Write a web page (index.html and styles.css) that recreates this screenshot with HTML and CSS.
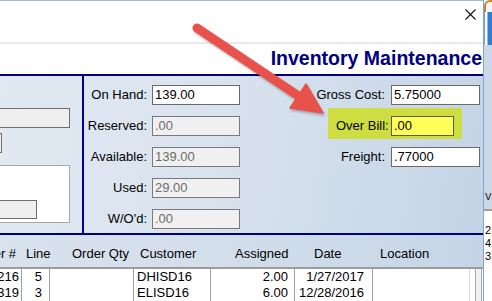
FILE: index.html
```html
<!DOCTYPE html>
<html>
<head>
<meta charset="utf-8">
<title>Inventory Maintenance</title>
<link rel="stylesheet" href="styles.css">
</head>
<body>
<div class="screen">
  <div class="dialog">
    <div class="topstrip"></div>
    <div class="titlebar">
      <svg class="close" viewBox="0 0 11 11" width="11" height="11"><path d="M0.5 0.5 L10.5 10.5 M10.5 0.5 L0.5 10.5" stroke="#111" stroke-width="1.1" fill="none"/></svg>
    </div>
    <div class="sep"></div>
    <div class="heading"><h1 class="title">Inventory Maintenance</h1></div>
    <div class="panel">
      <div class="left">
        <div class="box b1"></div>
        <div class="box b2"></div>
        <div class="list"><div class="box b3"></div></div>
      </div>
      <div class="mid">
        <div class="row"><span class="lbl">On Hand:</span><span class="fld">139.00</span></div>
        <div class="row"><span class="lbl">Reserved:</span><span class="fld dis">.00</span></div>
        <div class="row"><span class="lbl">Available:</span><span class="fld dis">139.00</span></div>
        <div class="row"><span class="lbl">Used:</span><span class="fld dis">29.00</span></div>
        <div class="row"><span class="lbl">W/O'd:</span><span class="fld dis">.00</span></div>
      </div>
      <div class="right">
        <div class="row"><span class="lbl">Gross Cost:</span><span class="fld">5.75000</span></div>
        <div class="row">
          <div class="hl"><span class="lbl">Over Bill:</span><span class="fld yellow">.00</span></div>
        </div>
        <div class="row"><span class="lbl">Freight:</span><span class="fld">.77000</span></div>
      </div>
    </div>
    <div class="grid">
      <div class="ghead">
        <span class="h h1">Order #</span>
        <span class="h h2">Line</span>
        <span class="h h3">Order Qty</span>
        <span class="h h4">Customer</span>
        <span class="h h5">Assigned</span>
        <span class="h h6">Date</span>
        <span class="h h7">Location</span>
      </div>
      <div class="gbody">
        <div class="grow">
          <span class="c c1">4216</span><span class="c c2">5</span><span class="c c3"></span><span class="c c4">DHISD16</span><span class="c c5">2.00</span><span class="c c6">1/27/2017</span><span class="c c7"></span><span class="c scroll"></span>
        </div>
        <div class="grow">
          <span class="c c1">4319</span><span class="c c2">3</span><span class="c c3"></span><span class="c c4">ELISD16</span><span class="c c5">6.00</span><span class="c c6">12/28/2016</span><span class="c c7"></span><span class="c scroll"></span>
        </div>
      </div>
    </div>
  </div>
  <div class="behind">
    <div class="bw-top"></div>
    <div class="bw-blue"></div>
    <div class="bw-panel"><span class="bw-v">v</span></div>
    <div class="bw-list"><span>2</span><span>4</span><span>3</span></div>
  </div>
  <svg class="arrow" viewBox="0 0 492 301" width="492" height="301">
    <g fill="#e8524a" stroke="#e8524a">
      <line x1="197" y1="28" x2="300" y2="97" stroke-width="9" stroke-linecap="round"/>
      <polygon points="290,108 306,84 323,113" stroke-width="1.5" stroke-linejoin="round"/>
    </g>
  </svg>
</div>
</body>
</html>
```
FILE: styles.css
```css
* { box-sizing: border-box; margin: 0; padding: 0; }
html, body { width: 492px; height: 301px; overflow: hidden; }
body {
  font-family: "Liberation Sans", Arial, sans-serif;
  font-size: 13px;
  color: #000;
  background: #fff;
}
.screen {
  position: relative;
  display: flex;
  width: 492px;
  height: 301px;
  overflow: hidden;
}
.dialog {
  width: 484px;
  flex: none;
  border-right: 1px solid #7ea6cf;
  display: flex;
  flex-direction: column;
  background: #fff;
}
.topstrip { height: 1px; background: #a9bacb; }
.titlebar {
  height: 43px;
  display: flex;
  justify-content: flex-end;
  align-items: flex-start;
  padding: 8px 7px 0 0;
}
.close { display: block; }
.sep { height: 2px; background: #e8e8e8; }
.heading {
  height: 32px;
  padding: 3px 1px 0 0;
  text-align: right;
}
.title {
  font-size: 19.5px;
  font-weight: bold;
  color: #000080;
  line-height: 22px;
  white-space: nowrap;
}
.panel {
  height: 161px;
  flex: none;
  display: flex;
  border-top: 2px solid #000080;
  border-bottom: 2px solid #000080;
  background: linear-gradient(100deg, #e1e9f2 0%, #d9e3ee 45%, #c4d4e6 100%);
}
.left {
  width: 84px;
  flex: none;
  border-right: 2px solid #000080;
  padding-top: 32px;
  display: flex;
  flex-direction: column;
  align-items: flex-start;
}
.box {
  height: 20px;
  background: #efefef;
  border: 1px solid #6e6e6e;
}
.b1 { width: 100px; margin-left: -30px; }
.b2 { width: 40px; margin-left: -38px; margin-top: 5px; }
.list {
  width: 100px;
  height: 58px;
  margin-left: -30px;
  margin-top: 12px;
  background: #fff;
  border: 1px solid #a8a8a8;
  padding-top: 34px;
}
.b3 { width: 66px; height: 19px; }
.mid {
  width: 161px;
  flex: none;
  padding-top: 9px;
  display: flex;
  flex-direction: column;
  gap: 11px;
}
.right {
  flex: 1;
  padding-top: 9px;
  display: flex;
  flex-direction: column;
  gap: 11px;
}
.row { display: flex; height: 20px; gap: 5px; }
.lbl {
  text-align: right;
  line-height: 20px;
  white-space: nowrap;
  color: #000;
}
.mid .lbl { width: 63px; }
.mid .fld { width: 88px; }
.right .row { gap: 6px; }
.right .lbl { width: 140px; }
.right .fld { width: 89px; }
.fld {
  height: 20px;
  background: #fff;
  border: 1px solid #6a6a6a;
  padding-left: 2px;
  line-height: 18px;
  color: #000;
  white-space: nowrap;
}
.fld.dis { background: #f0f0f0; color: #6d6d6d; border-color: #7a7a7a; }
.hl {
  display: flex;
  gap: 6px;
  margin: -8px 0 -3px 83px;
  padding: 8px 8px 3px 8px;
  background: #cedd42;
  height: 31px;
}
.right .hl .lbl { width: 49px; }
.right .hl .fld { width: 63px; }
.fld.yellow { background: #ffff5c; border-color: #5c5c40; }

.grid { flex: 1; display: flex; flex-direction: column; }
.ghead {
  height: 32px;
  flex: none;
  display: flex;
  padding-top: 11px;
  line-height: 16px;
  white-space: nowrap;
  background: linear-gradient(100deg, #d9e3ee 0%, #d3deeb 45%, #c5d5e7 100%);
}
.h { flex: none; }
.h1 { width: 54px; margin-left: -28px; }
.h2 { width: 46px; }
.h3 { width: 68px; }
.h4 { width: 95px; }
.h5 { width: 79px; }
.h6 { width: 66px; }
.h7 { width: 60px; }
.gbody {
  flex: 1;
  background: #fff;
  border-top: 2px solid #9c9c9c;
}
.grow { display: flex; height: 16px; line-height: 16px; white-space: nowrap; }
.c { flex: none; height: 16px; border-right: 1px solid #a0a0a0; overflow: hidden; }
.c1 { width: 62px; margin-left: -40px; text-align: right; padding-right: 2px; }
.c2 { width: 28px; text-align: right; padding-right: 7px; }
.c3 { width: 84px; }
.c4 { width: 77px; padding-left: 3px; }
.c5 { width: 84px; text-align: right; padding-right: 6px; }
.c6 { width: 78px; text-align: right; padding-right: 8px; }
.c7 { width: 97px; border-right-color: #d8d8d8; }
.scroll {
  width: 13px;
  border-right: none;
  background: linear-gradient(to right, #fff 0 5px, #a8a8a8 5px 6px, #f2f2f2 6px 11px, #a8a8a8 11px 12px, #fff 12px);
}

.behind {
  width: 8px;
  flex: none;
  display: flex;
  flex-direction: column;
  background: #fff;
}
.bw-top {
  height: 12px;
  background: #f4f4f4;
  border-top: 2px solid #c9803c;
  border-left: 2px solid #c9803c;
  border-top-left-radius: 6px;
}
.bw-blue {
  height: 33px;
  background: linear-gradient(to right, #6fa4da 0 1px, #ffffff 1px 3px, #9ab7d4 3px 4px, #2f7cd4 4px);
}
.bw-panel {
  height: 166px;
  background: #cbd8e8;
  border-bottom: 2px solid #a0a0a0;
  padding-top: 144px;
  padding-left: 1px;
  line-height: 14px;
  color: #333;
}
.bw-v { font-size: 13px; }
.bw-list {
  flex: 1;
  display: flex;
  flex-direction: column;
  padding-top: 13px;
  padding-left: 1px;
  font-size: 11px;
  line-height: 13px;
}
.arrow {
  position: absolute;
  left: 0;
  top: 0;
  pointer-events: none;
  filter: drop-shadow(1px 2px 1px rgba(0,0,0,0.25));
}
```
